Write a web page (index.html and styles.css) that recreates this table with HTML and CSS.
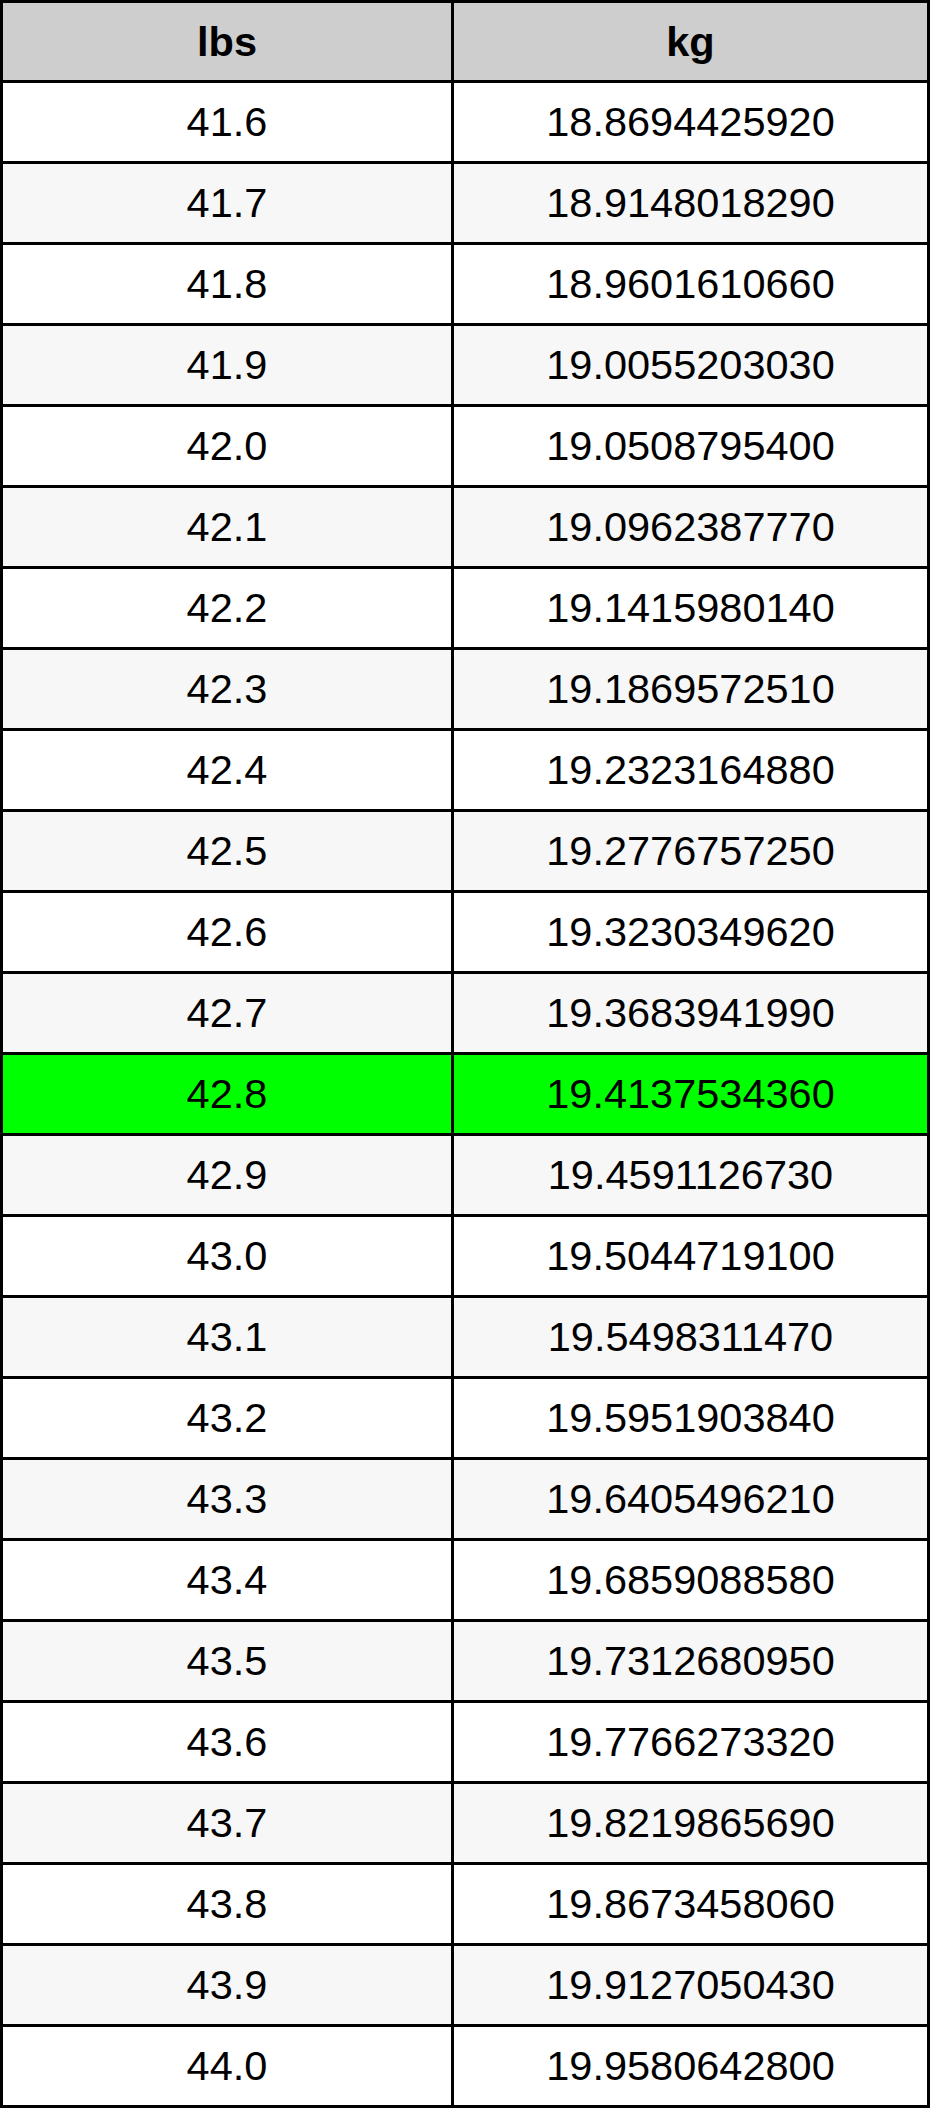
FILE: index.html
```html
<!DOCTYPE html>
<html lang="en">
<head>
<meta charset="utf-8">
<title>lbs to kg</title>
<link rel="stylesheet" href="styles.css">
</head>
<body>
<table class="conv">
  <colgroup><col class="c-lbs"><col class="c-kg"></colgroup>
  <thead>
    <tr><th>lbs</th><th>kg</th></tr>
  </thead>
  <tbody>
    <tr><td>41.6</td><td>18.8694425920</td></tr>
    <tr class="alt"><td>41.7</td><td>18.9148018290</td></tr>
    <tr><td>41.8</td><td>18.9601610660</td></tr>
    <tr class="alt"><td>41.9</td><td>19.0055203030</td></tr>
    <tr><td>42.0</td><td>19.0508795400</td></tr>
    <tr class="alt"><td>42.1</td><td>19.0962387770</td></tr>
    <tr><td>42.2</td><td>19.1415980140</td></tr>
    <tr class="alt"><td>42.3</td><td>19.1869572510</td></tr>
    <tr><td>42.4</td><td>19.2323164880</td></tr>
    <tr class="alt"><td>42.5</td><td>19.2776757250</td></tr>
    <tr><td>42.6</td><td>19.3230349620</td></tr>
    <tr class="alt"><td>42.7</td><td>19.3683941990</td></tr>
    <tr class="hl"><td>42.8</td><td>19.4137534360</td></tr>
    <tr class="alt"><td>42.9</td><td>19.4591126730</td></tr>
    <tr><td>43.0</td><td>19.5044719100</td></tr>
    <tr class="alt"><td>43.1</td><td>19.5498311470</td></tr>
    <tr><td>43.2</td><td>19.5951903840</td></tr>
    <tr class="alt"><td>43.3</td><td>19.6405496210</td></tr>
    <tr><td>43.4</td><td>19.6859088580</td></tr>
    <tr class="alt"><td>43.5</td><td>19.7312680950</td></tr>
    <tr><td>43.6</td><td>19.7766273320</td></tr>
    <tr class="alt"><td>43.7</td><td>19.8219865690</td></tr>
    <tr><td>43.8</td><td>19.8673458060</td></tr>
    <tr class="alt"><td>43.9</td><td>19.9127050430</td></tr>
    <tr><td>44.0</td><td>19.9580642800</td></tr>
  </tbody>
</table>
</body>
</html>
```

FILE: styles.css
```css
html, body {
  margin: 0;
  padding: 0;
  background: #ffffff;
}

.conv {
  table-layout: fixed;
  border-collapse: separate;
  border-spacing: 3px;
  background: #000000;
  width: 930px;
  font-family: "Liberation Sans", Arial, sans-serif;
  font-size: 41.5px;
  color: #000000;
}

.c-lbs { width: 448px; }
.c-kg { width: 473px; }

.conv th,
.conv td {
  padding: 0;
  text-align: center;
  vertical-align: middle;
  background: #ffffff;
  height: 78px;
}

.conv th {
  background: #cecece;
  font-weight: bold;
  height: 77px;
}

.conv tr.alt td {
  background: #f7f7f7;
}

.conv tr.hl td {
  background: #00ff00;
}
```
